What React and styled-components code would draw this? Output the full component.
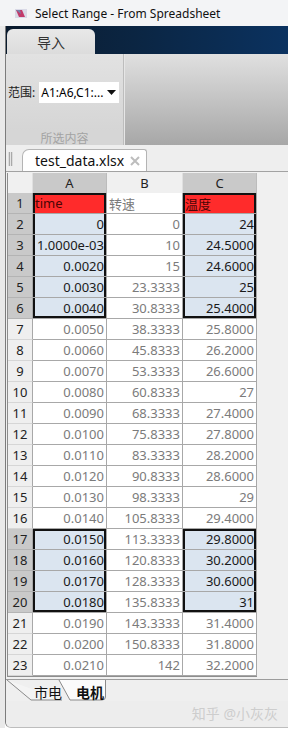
import React from 'react';
import styled, { createGlobalStyle, css } from 'styled-components';

const GlobalStyle = createGlobalStyle`
  html, body { margin: 0; padding: 0; background: #fff; }
  body { font-family: "Noto Sans", "Noto Sans CJK SC", sans-serif; }
`;

const Screen = styled.div`
  width: 288px;
  height: 732px;
  overflow: hidden;
  display: flex;
  flex-direction: column;
  background: #fff;
`;

const TitleBar = styled.div`
  height: 26px;
  flex: none;
  display: flex;
  align-items: center;
  gap: 8px;
  padding-left: 15px;
  background: #f3f4f6;
  font-size: 12px;
  color: #111;
  white-space: nowrap;
`;

const Body = styled.div`
  height: 702px;
  flex: none;
  display: flex;
`;

const LeftStrip = styled.div`
  width: 5px;
  flex: none;
  background: #e9e9e9;
`;

const Window = styled.div`
  flex: 1;
  display: flex;
  flex-direction: column;
  border-left: 1px solid #7c7c7c;
  border-bottom: 1px solid #bdbdbd;
  border-bottom-left-radius: 6px;
  background: #ededed;
  overflow: hidden;
`;

const RibbonTabs = styled.div`
  height: 28px;
  flex: none;
  box-sizing: border-box;
  padding: 3px 0 0 1px;
  background: linear-gradient(90deg, #0a1b2e 0%, #0b2542 45%, #0b3260 100%);
`;

const RibbonTab = styled.div`
  width: 88px;
  height: 25px;
  border-radius: 6px 6px 0 0;
  background: linear-gradient(#e8e8e8, #dcdcdc);
  display: flex;
  align-items: center;
  justify-content: center;
  font-size: 14px;
  color: #333;
`;

const Toolstrip = styled.div`
  height: 91px;
  flex: none;
  display: flex;
`;

const Section = styled.div`
  width: 117px;
  display: flex;
  flex-direction: column;
  background: linear-gradient(#e2e2e2, #d3d3d3);
  border-right: 1px solid #bdbdbd;
  box-shadow: 1px 0 0 #e6e6e6;
`;

const SectionBody = styled.div`
  flex: 1;
  display: flex;
  align-items: center;
  gap: 4px;
  padding-left: 2px;
  font-size: 12px;
  color: #222;
`;

const SectionLabel = styled.div`
  height: 15px;
  display: flex;
  align-items: center;
  justify-content: center;
  font-size: 12px;
  color: #a3a3a3;
  background: #d6d6d6;
`;

const Select = styled.div`
  width: 80px;
  height: 21px;
  box-sizing: border-box;
  background: #fff;
  display: flex;
  align-items: center;
  justify-content: space-between;
  padding: 0 3px 0 2px;
  font-size: 12px;
  color: #000;
  white-space: nowrap;
`;

const ToolFill = styled.div`
  flex: 1;
  margin-left: 1px;
  background: linear-gradient(#e0e0e0, #a7a7a7);
`;

const DocBar = styled.div`
  height: 27px;
  flex: none;
  box-sizing: border-box;
  display: flex;
  align-items: flex-end;
  gap: 9px;
  padding: 3px 0 0 2px;
  background: #eeeeee;
  border-bottom: 1px solid #a2a2a2;
`;

const Grip = styled.div`
  width: 5px;
  height: 14px;
  margin-bottom: 5px;
  background-image: radial-gradient(circle, #8f8f8f 0.7px, transparent 1px);
  background-size: 2.5px 2px;
  background-position: 0 0;
`;

const DocTab = styled.div`
  width: 125px;
  height: 22px;
  box-sizing: border-box;
  display: flex;
  align-items: center;
  justify-content: space-between;
  padding: 0 6px 0 12px;
  background: #fff;
  border: 1px solid #b4b4b4;
  border-bottom: none;
  border-radius: 7px 3px 0 0;
  font-size: 14px;
  color: #111;
`;

const SheetArea = styled.div`
  height: 507px;
  flex: none;
  box-sizing: border-box;
  padding: 1px 0 0 1px;
  display: flex;
  background: #f0f0f0;
`;

const Grid = styled.div`
  display: grid;
  grid-template-columns: 25px 74px 76px 74px;
  grid-auto-rows: 21px;
  grid-template-rows: 20px;
  align-self: flex-start;
  border-left: 1px solid #8d8d8d;
  border-bottom: 1px solid #8d8d8d;
  background: #fff;
`;

const HeadCell = styled.div`
  box-sizing: border-box;
  display: flex;
  align-items: center;
  justify-content: center;
  font-size: 13px;
  color: #222;
  background: ${p => (p.$active ? '#c9c9c9' : '#f0f0f0')};
  border-right: 1px solid ${p => (p.$active ? '#bcbcbc' : '#e0e0e0')};
`;

const RowHead = styled.div`
  box-sizing: border-box;
  display: flex;
  align-items: center;
  justify-content: center;
  font-size: 13px;
  color: #222;
  background: ${p => (p.$active ? '#c9c9c9' : '#efefef')};
  border-bottom: 1px solid ${p => (p.$active ? '#b4b4b4' : '#d6d6d6')};
  border-right: 1px solid #a8a8a8;
`;

const outline = p => {
  if (!p.$sel) return '';
  const s = ['inset 2px 0 0 #111', 'inset -2px 0 0 #111'];
  if (p.$top) s.push('inset 0 2px 0 #111');
  if (p.$bottom) s.push('inset 0 -2px 0 #111');
  return css`box-shadow: ${s.join(', ')};`;
};

const Cell = styled.div`
  box-sizing: border-box;
  display: flex;
  align-items: center;
  justify-content: ${p => (p.$left ? 'flex-start' : 'flex-end')};
  padding: 0 2px;
  font-size: 13px;
  white-space: nowrap;
  overflow: hidden;
  border-right: 1px solid #a8a8a8;
  border-bottom: 1px solid #a8a8a8;
  color: ${p => (p.$red ? '#4a0505' : p.$sel ? '#1a1a1a' : '#7b7b7b')};
  background: ${p => (p.$red ? '#ff2b2b' : p.$sel ? '#dbe5f0' : '#fff')};
  ${outline}
`;

const SheetTabs = styled.div`
  position: relative;
  height: 22px;
  flex: none;
  display: flex;
  align-items: center;
  padding: 2px 0 0 28px;
  box-sizing: border-box;
  gap: 14px;
  font-size: 14px;
  color: #111;
  background: #efefef;
  border-top: 1px solid #9c9c9c;
`;

const TabShape = styled.svg`
  position: absolute;
  left: 0;
  top: -1px;
`;

const SheetTab = styled.span`
  position: relative;
  font-weight: ${p => (p.$active ? 700 : 400)};
`;

const Footer = styled.div`
  flex: 1;
  display: flex;
  align-items: center;
  justify-content: flex-end;
  padding: 0 10px 2px 0;
  font-size: 14px;
  color: #cdcdcd;
  background: #ededed;
`;

const A = ['time', '0', '1.0000e-03', '0.0020', '0.0030', '0.0040', '0.0050', '0.0060', '0.0070', '0.0080', '0.0090', '0.0100', '0.0110', '0.0120', '0.0130', '0.0140', '0.0150', '0.0160', '0.0170', '0.0180', '0.0190', '0.0200', '0.0210'];
const B = ['转速', '0', '10', '15', '23.3333', '30.8333', '38.3333', '45.8333', '53.3333', '60.8333', '68.3333', '75.8333', '83.3333', '90.8333', '98.3333', '105.8333', '113.3333', '120.8333', '128.3333', '135.8333', '143.3333', '150.8333', '142'];
const C = ['温度', '24', '24.5000', '24.6000', '25', '25.4000', '25.8000', '26.2000', '26.6000', '27', '27.4000', '27.8000', '28.2000', '28.6000', '29', '29.4000', '29.8000', '30.2000', '30.6000', '31', '31.4000', '31.8000', '32.2000'];

const blocks = [[1, 6], [17, 20]];
const inBlock = r => blocks.find(([a, b]) => r >= a && r <= b);

const AppIcon = () => (
  <svg width="12" height="11" viewBox="0 0 12 11">
    <rect x="0" y="1" width="12" height="9" fill="#d9d9e6" />
    <path d="M1 2 L7 2 L10 9 L4 9 Z" fill="#c23a6a" />
    <path d="M1 2 L5 2 L6 6 Z" fill="#7a7fa8" />
  </svg>
);

const Caret = () => (
  <svg width="9" height="5" viewBox="0 0 9 5">
    <path d="M0 0 H9 L4.5 5 Z" fill="#111" />
  </svg>
);

const CloseX = () => (
  <svg width="10" height="10" viewBox="0 0 10 10">
    <path d="M1 1 L9 9 M9 1 L1 9" stroke="#bdbdbd" strokeWidth="2" />
  </svg>
);

export default function App() {
  const rows = A.map((_, i) => {
    const r = i + 1;
    const blk = inBlock(r);
    const sel = !!blk;
    const top = blk && blk[0] === r;
    const bottom = blk && blk[1] === r;
    return (
      <React.Fragment key={r}>
        <RowHead $active={sel}>{r}</RowHead>
        <Cell $sel={sel} $top={top} $bottom={bottom} $red={r === 1} $left={r === 1}>{A[i]}</Cell>
        <Cell $left={r === 1}>{B[i]}</Cell>
        <Cell $sel={sel} $top={top} $bottom={bottom} $red={r === 1} $left={r === 1}>{C[i]}</Cell>
      </React.Fragment>
    );
  });

  return (
    <Screen>
      <GlobalStyle />
      <TitleBar>
        <AppIcon />
        <span>Select Range - From Spreadsheet</span>
      </TitleBar>
      <Body>
        <LeftStrip />
        <Window>
          <RibbonTabs>
            <RibbonTab>导入</RibbonTab>
          </RibbonTabs>
          <Toolstrip>
            <Section>
              <SectionBody>
                <span>范围:</span>
                <Select>
                  <span>A1:A6,C1:...</span>
                  <Caret />
                </Select>
              </SectionBody>
              <SectionLabel>所选内容</SectionLabel>
            </Section>
            <ToolFill />
          </Toolstrip>
          <DocBar>
            <Grip />
            <DocTab>
              <span>test_data.xlsx</span>
              <CloseX />
            </DocTab>
          </DocBar>
          <SheetArea>
            <Grid>
              <HeadCell />
              <HeadCell $active>A</HeadCell>
              <HeadCell>B</HeadCell>
              <HeadCell $active>C</HeadCell>
              {rows}
            </Grid>
          </SheetArea>
          <SheetTabs>
            <TabShape width="104" height="23" viewBox="0 0 104 23">
              <path d="M1 1 L25 21 L56 21" fill="#f4f4f4" stroke="#8a8a8a" />
              <path d="M53 1 L64 21 L96 21 Q99.5 21 99.5 18 L99.5 1" fill="#fbfbfb" stroke="#8a8a8a" />
            </TabShape>
            <SheetTab>市电</SheetTab>
            <SheetTab $active>电机</SheetTab>
          </SheetTabs>
          <Footer>知乎 @小灰灰</Footer>
        </Window>
      </Body>
    </Screen>
  );
}
